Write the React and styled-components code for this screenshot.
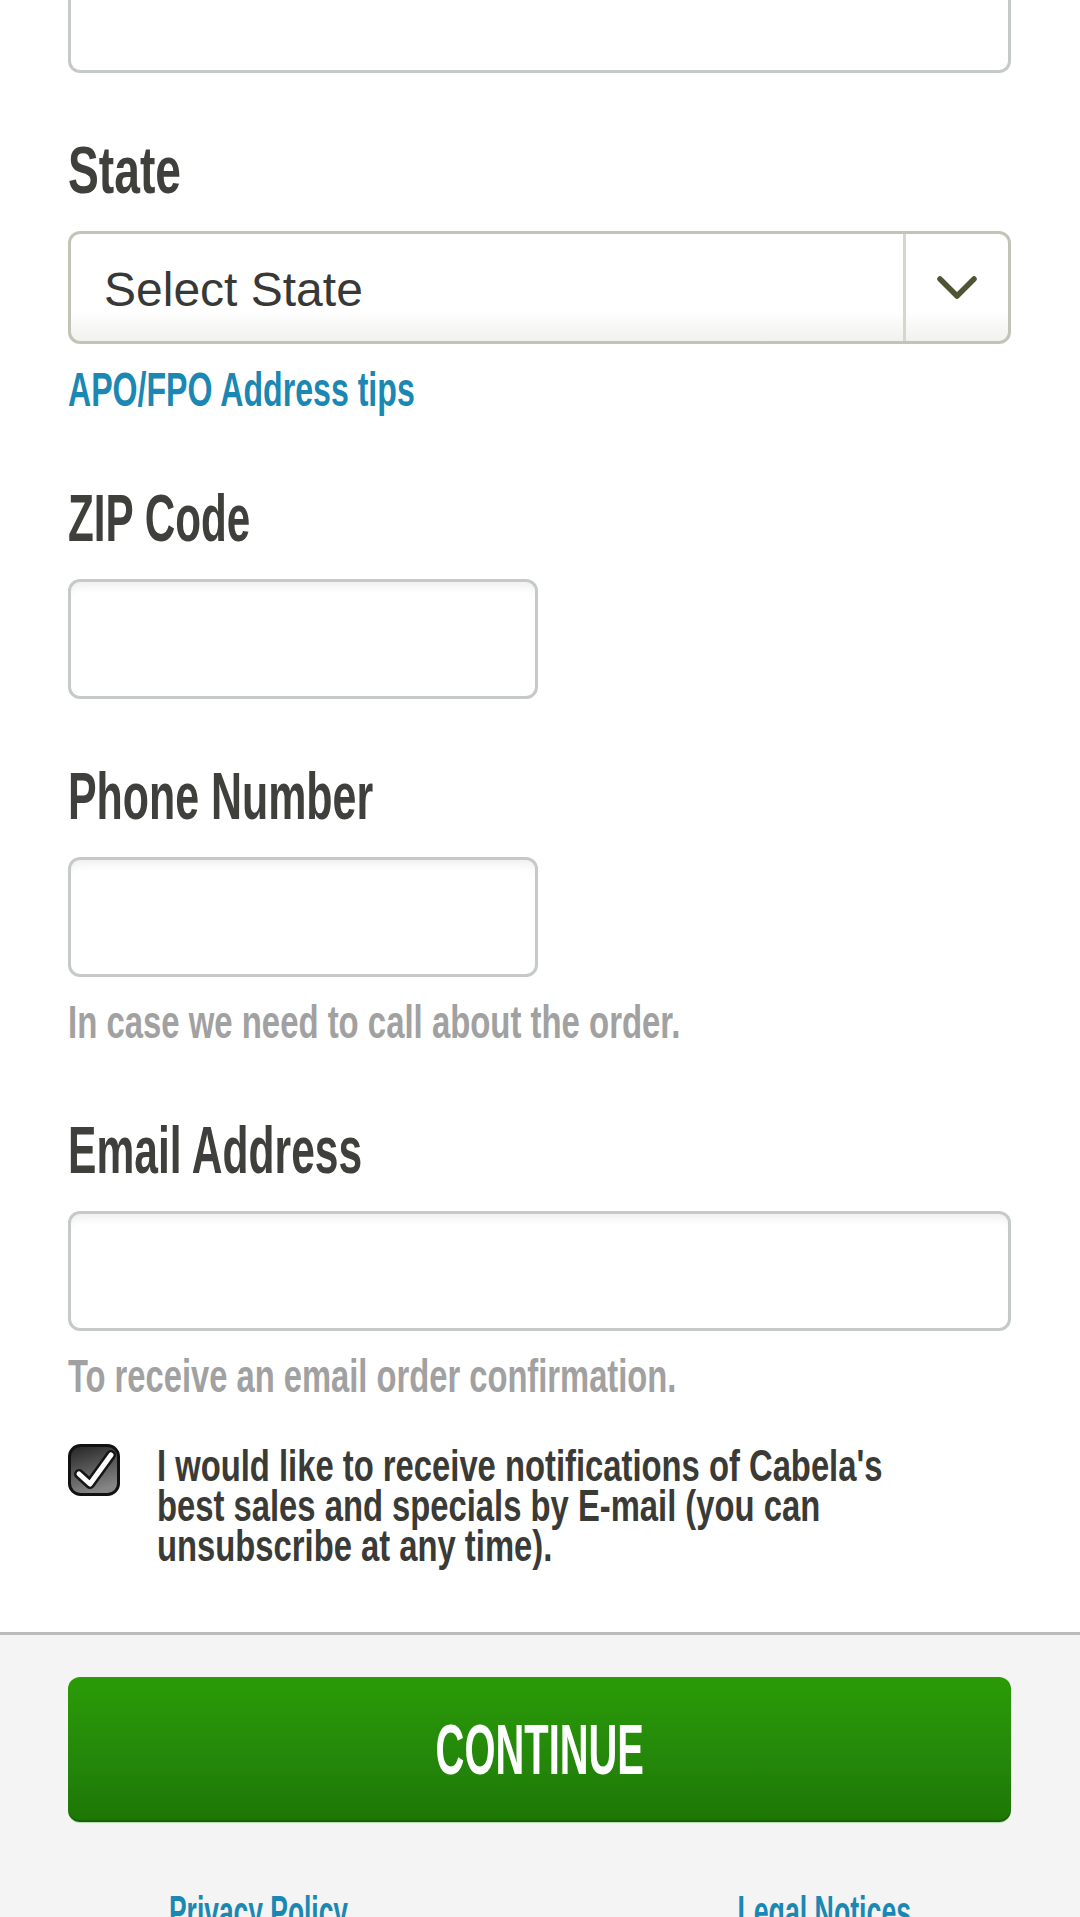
import React from 'react';
import styled, { createGlobalStyle, css } from 'styled-components';

const GlobalStyle = createGlobalStyle`
  html, body {
    margin: 0;
    padding: 0;
    background: #ffffff;
  }
  body {
    font-family: "Liberation Sans", Arial, sans-serif;
  }
  * {
    box-sizing: border-box;
  }
`;

// narrow display face: squeeze a sans horizontally
const squeeze = css`
  display: block;
  white-space: nowrap;
  transform: scaleX(${p => p.$squeeze || 0.65});
  transform-origin: ${p => (p.$align === 'right' ? 'right' : p.$align === 'center' ? 'center' : 'left')} center;
`;

const Page = styled.div`
  width: 1080px;
  min-height: 1917px;
  display: flex;
  flex-direction: column;
  overflow: hidden;
`;

const FormSection = styled.div`
  padding: 0 69px 66px 68px;
  display: flex;
  flex-direction: column;
`;

const Field = styled.div`
  margin-top: 64px;
  display: flex;
  flex-direction: column;
  align-items: flex-start;
`;

const Label = styled.div`
  font-weight: 700;
  font-size: 66px;
  line-height: 66px;
  color: #3f3f3b;
  margin-bottom: 28px;
  ${squeeze}
`;

const TextInput = styled.input`
  appearance: none;
  display: block;
  width: ${p => (p.$half ? '470px' : '100%')};
  height: 120px;
  margin: 0;
  padding: 0 30px;
  border: 3px solid #c6c9c9;
  border-radius: 12px;
  background: #ffffff;
  box-shadow: inset 0 10px 10px -6px rgba(0, 0, 0, 0.07);
  font: 48px "Liberation Sans", Arial, sans-serif;
  outline: none;
`;

const ClippedInput = styled(TextInput)`
  height: 73px;
  border-top: none;
  border-top-left-radius: 0;
  border-top-right-radius: 0;
  box-shadow: none;
`;

const SelectBox = styled.div`
  width: 100%;
  height: 113px;
  display: flex;
  border: 3px solid #c4c4b6;
  border-radius: 12px;
  background: linear-gradient(to bottom, #ffffff 0%, #ffffff 72%, #f1f1ee 100%);
  overflow: hidden;
`;

const SelectValue = styled.div`
  flex: 1;
  display: flex;
  align-items: center;
  padding: 4px 0 0 33px;
  font-size: 48px;
  color: #383836;
`;

const SelectArrow = styled.div`
  width: 105px;
  display: flex;
  align-items: center;
  justify-content: center;
  border-left: 3px solid #d6d6cc;
`;

const TipLink = styled.a`
  margin: 19px 0 4px;
  font-weight: 700;
  font-size: 48px;
  line-height: 54px;
  color: #1b87b3;
  text-decoration: none;
  ${squeeze}
`;

const Hint = styled.div`
  margin: 21px 0 8px;
  font-weight: 700;
  font-size: 47px;
  line-height: 47px;
  color: #a1a1a1;
  ${squeeze}
`;

const OptInRow = styled.div`
  margin-top: 37px;
  display: flex;
  align-items: flex-start;
  gap: 37px;
`;

const CheckMark = styled.div`
  flex: 0 0 52px;
  height: 52px;
`;

const OptInTextWrap = styled.div`
  flex: 1;
  min-width: 0;
  padding-top: 2px;
`;

const OptInText = styled.div`
  font-weight: 700;
  font-size: 44px;
  line-height: 40px;
  color: #3a3a36;
  ${squeeze}
`;

const Footer = styled.div`
  flex: 1;
  background: #f4f4f4;
  border-top: 3px solid #bcbcbc;
  padding-top: 42px;
  display: flex;
  flex-direction: column;
`;

const ContinueButton = styled.button`
  margin: 0 69px 0 68px;
  height: 145px;
  border: none;
  border-radius: 12px;
  background: linear-gradient(to bottom, #2a9c07 0%, #24880a 55%, #1d7604 100%);
  box-shadow: inset 0 -2px 0 rgba(0, 0, 0, 0.18), 0 1px 0 rgba(120, 200, 110, 0.5);
  display: flex;
  align-items: center;
  justify-content: center;
  cursor: pointer;
`;

const ButtonLabel = styled.span`
  font-family: "Liberation Sans", Arial, sans-serif;
  font-weight: 700;
  font-size: 70px;
  line-height: 70px;
  color: #ffffff;
  ${squeeze}
`;

const FooterLinks = styled.div`
  margin-top: 68px;
  padding: 0 169px;
  display: flex;
  justify-content: space-between;
`;

const FooterLink = styled.a`
  font-weight: 700;
  font-size: 44px;
  line-height: 44px;
  color: #1b87b3;
  text-decoration: none;
  ${squeeze}
`;

const Chevron = () => (
  <svg width="40" height="24" viewBox="0 0 40 24">
    <polyline
      points="3,3 20,20 37,3"
      fill="none"
      stroke="#4f5435"
      strokeWidth="5.5"
      strokeLinecap="round"
      strokeLinejoin="round"
    />
  </svg>
);

const CheckedBox = () => (
  <svg width="52" height="52" viewBox="0 0 52 52">
    <defs>
      <linearGradient id="optInFill" x1="0" y1="0" x2="0.3" y2="1">
        <stop offset="0" stopColor="#232323" />
        <stop offset="1" stopColor="#858585" />
      </linearGradient>
    </defs>
    <rect x="1.5" y="1.5" width="49" height="49" rx="11" fill="url(#optInFill)" stroke="#111" strokeWidth="3" />
    <path d="M11 30 L22 40 L43 11" fill="none" stroke="#151515" strokeWidth="10" strokeLinecap="round" strokeLinejoin="round" />
    <path d="M11 30 L22 40 L43 11" fill="none" stroke="#ffffff" strokeWidth="5" strokeLinecap="round" strokeLinejoin="round" />
  </svg>
);

const App = () => (
  <>
    <GlobalStyle />
    <Page>
      <FormSection>
        <ClippedInput type="text" aria-label="City" />

        <Field>
          <Label $squeeze={0.7}>State</Label>
          <SelectBox role="listbox">
            <SelectValue>Select State</SelectValue>
            <SelectArrow>
              <Chevron />
            </SelectArrow>
          </SelectBox>
          <TipLink href="#" $squeeze={0.669}>APO/FPO Address tips</TipLink>
        </Field>

        <Field>
          <Label $squeeze={0.64}>ZIP Code</Label>
          <TextInput type="text" $half />
        </Field>

        <Field>
          <Label $squeeze={0.65}>Phone Number</Label>
          <TextInput type="tel" $half />
          <Hint $squeeze={0.7}>In case we need to call about the order.</Hint>
        </Field>

        <Field>
          <Label $squeeze={0.645}>Email Address</Label>
          <TextInput type="email" />
          <Hint $squeeze={0.696}>To receive an email order confirmation.</Hint>
        </Field>

        <OptInRow>
          <CheckMark>
            <CheckedBox />
          </CheckMark>
          <OptInTextWrap>
            <OptInText $squeeze={0.745}>
              I would like to receive notifications of Cabela's
              <br />
              best sales and specials by E-mail (you can
              <br />
              unsubscribe at any time).
            </OptInText>
          </OptInTextWrap>
        </OptInRow>
      </FormSection>

      <Footer>
        <ContinueButton type="button">
          <ButtonLabel $squeeze={0.57} $align="center">CONTINUE</ButtonLabel>
        </ContinueButton>
        <FooterLinks>
          <FooterLink href="#" $squeeze={0.6}>Privacy Policy</FooterLink>
          <FooterLink href="#" $squeeze={0.607} $align="right">Legal Notices</FooterLink>
        </FooterLinks>
      </Footer>
    </Page>
  </>
);

export default App;
